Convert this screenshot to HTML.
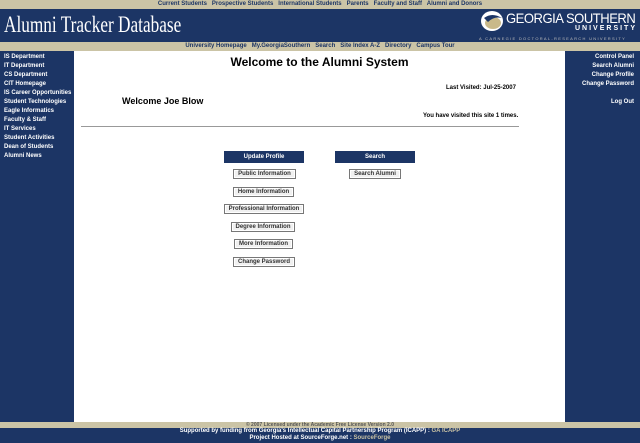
<!DOCTYPE html>
<html><head><style>
body{margin:0;width:640px;height:443px;overflow:hidden;background:#fff;font-family:"Liberation Sans",sans-serif;position:relative}
.a{position:absolute;white-space:nowrap}
.tan{background:#cbc4a6}
.blue{background:#1c3565}
.top{left:0;top:0;width:640px;height:9px;font-size:6px;font-weight:bold;color:#1c3565;text-align:center;line-height:9px}
.hdr{left:0;top:9px;width:640px;height:33px}
.nav2{left:0;top:42px;width:640px;height:9px;font-size:6px;font-weight:bold;color:#1c3565;text-align:center;line-height:9px}
.ls{left:0;top:51px;width:74px;height:371px;font-size:6px;font-weight:bold;color:#fff;line-height:9px}
.rs{left:565px;top:51px;width:75px;height:371px;font-size:6px;font-weight:bold;color:#fff;line-height:9px;text-align:right}
.btn{position:absolute;font-size:6px;font-weight:bold;color:#333;border:1px solid #777;background:#f0f0f0;height:8px;line-height:8px;text-align:center;box-shadow:inset 0 0 0 1px #fff;white-space:nowrap}
.hd{position:absolute;font-size:6px;font-weight:bold;color:#fff;background:#1c3565;height:12px;line-height:12px;text-align:center}
</style></head><body>
<div class="a tan top">Current Students &nbsp; Prospective Students &nbsp; International Students &nbsp; Parents &nbsp; Faculty and Staff &nbsp; Alumni and Donors</div>
<div class="a blue hdr">
 <div class="a" style="left:4px;top:3px;font-family:'Liberation Serif',serif;font-size:23px;color:#fff;transform:scaleX(0.75);transform-origin:0 0">Alumni Tracker Database</div>
 <svg class="a" style="left:480px;top:1px" width="24" height="22"><ellipse cx="12" cy="11" rx="11" ry="10" fill="#fff"/><ellipse cx="13" cy="13" rx="8" ry="6" fill="#c9b98a"/><path d="M4 8 Q12 2 22 8 Q14 6 8 12 Z" fill="#1c3565"/></svg>
 <div class="a" style="left:506px;top:1px;font-size:14px;color:#fff;transform:scaleX(0.93);transform-origin:0 0;letter-spacing:-0.5px">GEORGIA SOUTHERN</div>
 <div class="a" style="left:575px;top:16px;font-size:7px;font-weight:bold;color:#fff;letter-spacing:2px">UNIVERSITY</div>
 <div class="a" style="left:479px;top:27px;font-size:4px;color:#bbb;letter-spacing:1.3px">A CARNEGIE DOCTORAL-RESEARCH UNIVERSITY</div>
</div>
<div class="a tan nav2">University Homepage &nbsp; My.GeorgiaSouthern &nbsp; Search &nbsp; Site Index A-Z &nbsp; Directory &nbsp; Campus Tour</div>
<div class="a blue ls"><div style="padding:2px 0 0 4px">IS Department<br>IT Department<br>CS Department<br>CIT Homepage<br>IS Career Opportunities<br>Student Technologies<br>Eagle Informatics<br>Faculty &amp; Staff<br>IT Services<br>Student Activities<br>Dean of Students<br>Alumni News</div></div>
<div class="a blue rs"><div style="padding:2px 6px 0 0">Control Panel<br>Search Alumni<br>Change Profile<br>Change Password<br><br>Log Out</div></div>
<div class="a" style="left:74px;top:55px;width:491px;text-align:center;font-size:12px;font-weight:bold;color:#000">Welcome to the Alumni System</div>
<div class="a" style="left:446px;top:85px;font-size:6px;font-weight:bold">Last Visited: Jul-25-2007</div>
<div class="a" style="left:122px;top:96px;font-size:9px;font-weight:bold">Welcome Joe Blow</div>
<div class="a" style="left:423px;top:113px;font-size:6px;font-weight:bold">You have visited this site 1 times.</div>
<div class="a" style="left:81px;top:126px;width:438px;height:1px;background:#999"></div>
<div class="hd" style="left:224px;top:151px;width:80px">Update Profile</div>
<div class="hd" style="left:335px;top:151px;width:80px">Search</div>
<div class="btn" style="left:233px;top:169px;width:61px">Public Information</div>
<div class="btn" style="left:349px;top:169px;width:50px">Search Alumni</div>
<div class="btn" style="left:233px;top:187px;width:59px">Home Information</div>
<div class="btn" style="left:224px;top:204px;width:78px">Professional Information</div>
<div class="btn" style="left:231px;top:222px;width:62px">Degree Information</div>
<div class="btn" style="left:234px;top:239px;width:57px">More Information</div>
<div class="btn" style="left:233px;top:257px;width:60px">Change Password</div>
<div class="a tan" style="left:0;top:422px;width:640px;height:6px;font-size:5px;font-weight:bold;color:#555;text-align:center;line-height:6px">© 2007 Licensed under the Academic Free License Version 2.0</div>
<div class="a blue" style="left:0;top:428px;width:640px;height:15px;font-size:6px;font-weight:bold;color:#fff;text-align:center;line-height:7px">Supported by funding from Georgia's Intellectual Capital Partnership Program (ICAPP) : <span style="color:#c9c2a4">GA ICAPP</span><br>Project Hosted at SourceForge.net : <span style="color:#c9c2a4">SourceForge</span></div>
</body></html>
